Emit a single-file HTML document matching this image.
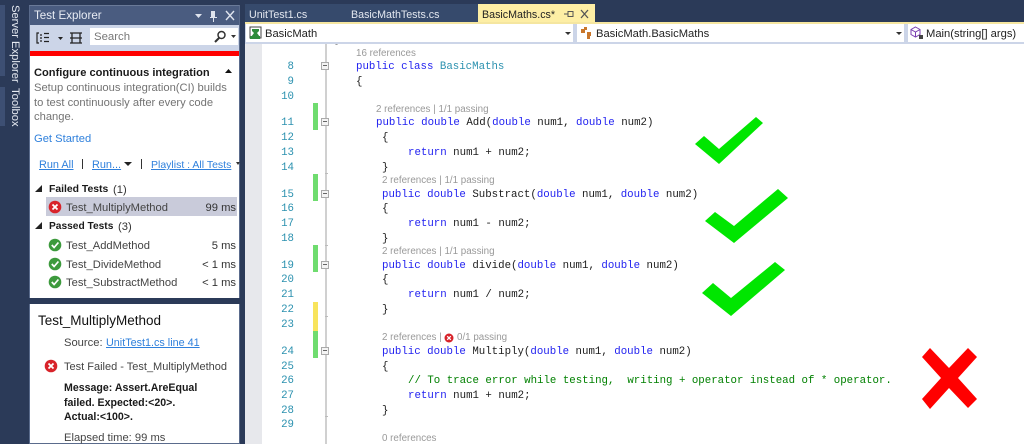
<!DOCTYPE html>
<html><head><meta charset="utf-8"><style>
*{margin:0;padding:0;box-sizing:border-box}
html,body{width:1024px;height:444px;overflow:hidden;background:#2b3a58}
#r{position:relative;width:1024px;height:444px;overflow:hidden;filter:blur(.3px);font-family:"Liberation Sans",sans-serif;font-size:11.2px;color:#222}
#r>*,.a{position:absolute}
.t{position:absolute;white-space:nowrap;line-height:14px;height:14px;margin-top:1px}
.b{font-weight:bold;color:#1a1a1a;font-size:10.6px}
.l{color:#2f80dc;text-decoration:underline}
.c{position:absolute;white-space:pre;font-family:"Liberation Mono",monospace;font-size:10.75px;line-height:14px;height:14px;color:#1c1c1c;margin-top:1px}
.k{color:#2222f0}.y{color:#2b91af}.g{color:#008000}
.n{position:absolute;left:270px;width:24px;text-align:right;font-family:"Liberation Mono",monospace;font-size:10.75px;line-height:14px;color:#2b91af;margin-top:1px}
.f{position:absolute;white-space:nowrap;font-size:9.8px;line-height:12px;color:#999;margin-top:1px}
.fb{position:absolute;left:321px;width:8px;height:8px;border:1px solid #aaa;background:#f4f4f4}
.fb:after{content:"";position:absolute;left:1px;top:2px;width:4px;height:1px;background:#666}
.m{position:absolute;left:325px;width:3px;height:1px;background:#bbb}
.bar{position:absolute;left:313px;width:5px}
.tr{position:absolute;right:788px;white-space:nowrap;line-height:14px;margin-top:1px}
</style></head><body><div id="r">
<!-- left strip -->
<div style="left:0;top:5px;width:5px;height:71px;background:#3d4f73"></div>
<div style="left:0;top:87px;width:5px;height:39px;background:#3d4f73"></div>
<div class="t" style="left:8px;top:4px;color:#e6eaf2;transform-origin:0 0;transform:translateX(14px) rotate(90deg)">Server Explorer</div>
<div class="t" style="left:8px;top:87px;color:#e6eaf2;transform-origin:0 0;transform:translateX(14px) rotate(90deg)">Toolbox</div>

<!-- test explorer -->
<div style="left:29px;top:5px;width:211px;height:439px;background:#fff;border:1px solid #5a6b8c;border-top:1px solid #6a7a98"></div>
<div style="left:30px;top:6px;width:209px;height:19px;background:#4a5c80"></div>
<div class="t" style="left:34px;top:8px;color:#e8ecf4;font-size:11.6px">Test Explorer</div>
<svg style="left:190px;top:8px" width="48" height="16" viewBox="0 0 48 16"><path d="M5 6h7l-3.500 4z" fill="#dfe4ee"/><path d="M21 3h4v6h2v1h-3v4h-1v-4h-3V9h1zM22.500 4v5" fill="#dfe4ee"/><path d="M36 3l8 9M44 3l-8 9" stroke="#dfe4ee" stroke-width="1.400" fill="none"/></svg>
<div style="left:30px;top:25px;width:209px;height:26px;background:#ccd5e8"></div>
<svg style="left:36px;top:30px" width="50" height="16" viewBox="0 0 50 16"><path d="M3 3H1v10h2M4 5h2M4 8h2M4 11h2M8 3.500h5M8 7.500h5M8 11.500h5" stroke="#222" stroke-width="1.200" fill="none"/><path d="M22 7h5l-2.500 3z" fill="#222"/><path d="M34 3h12M34 8h12M34 13h12M36 3v10M44 3v10" stroke="#222" stroke-width="1.300" fill="none"/></svg>
<div style="left:90px;top:28px;width:148px;height:17px;background:#fff"></div>
<div class="t" style="left:94px;top:29px;color:#777;font-size:11.4px">Search</div>
<svg style="left:212px;top:29px" width="26" height="16" viewBox="0 0 26 16"><circle cx="9.500" cy="6" r="3.500" fill="none" stroke="#333" stroke-width="1.500"/><path d="M7 9l-4 4" stroke="#333" stroke-width="2"/><path d="M19 6h5l-2.500 3z" fill="#333"/></svg>
<div style="left:30px;top:51px;width:209px;height:5px;background:#f00"></div>
<div class="t b" style="left:34px;top:65px;font-size:11.1px">Configure continuous integration</div>
<svg style="left:224px;top:68px" width="10" height="7"><path d="M1 5h7L4.500 1z" fill="#111"/></svg>
<div class="t" style="left:34px;top:80px;color:#737373">Setup continuous integration(CI) builds</div>
<div class="t" style="left:34px;top:95px;color:#737373">to test continuously after every code</div>
<div class="t" style="left:34px;top:109px;color:#737373">change.</div>
<div class="t" style="left:34px;top:131px;color:#2f80dc">Get Started</div>
<div class="t l" style="left:39px;top:157px;font-size:10.9px">Run All</div>
<div style="left:82px;top:159px;width:1px;height:10px;background:#333"></div>
<div class="t l" style="left:92px;top:157px;font-size:10.9px">Run...</div>
<svg style="left:123px;top:161px" width="10" height="6"><path d="M1 1h8L5 5z" fill="#222"/></svg>
<div style="left:141px;top:159px;width:1px;height:10px;background:#333"></div>
<div class="t l" style="left:151px;top:157px;font-size:10.5px">Playlist : All Tests</div>
<svg style="left:236px;top:162px" width="4" height="4"><path d="M0 0h4L2 3z" fill="#333"/></svg>

<svg style="left:34px;top:184px" width="9" height="9"><path d="M8 1v7H1z" fill="#222"/></svg>
<div class="t b" style="left:49px;top:182px;font-size:10.4px">Failed Tests</div><div class="t" style="left:113px;top:182px;color:#333">(1)</div>
<div style="left:46px;top:197px;width:191px;height:19px;background:#c9cbda"></div>
<svg style="left:48px;top:200px" width="14" height="14" viewBox="0 0 14 14"><circle cx="7" cy="7" r="6.300" fill="#d8232a"/><path d="M4.500 4.500l5 5M9.500 4.500l-5 5" stroke="#fff" stroke-width="1.800"/></svg>
<div class="t" style="left:66px;top:200px;color:#444">Test_MultiplyMethod</div><div class="tr" style="top:200px;color:#333">99 ms</div>
<svg style="left:34px;top:221px" width="9" height="9"><path d="M8 1v7H1z" fill="#222"/></svg>
<div class="t b" style="left:49px;top:219px;font-size:10.2px">Passed Tests</div><div class="t" style="left:118px;top:219px;color:#333">(3)</div>
<svg style="left:48px;top:238px" width="14" height="14" viewBox="0 0 14 14"><circle cx="7" cy="7" r="6.300" fill="#3d9a3d"/><path d="M3.800 7l2.300 2.500 4.300-5" stroke="#fff" stroke-width="1.700" fill="none"/></svg>
<div class="t" style="left:66px;top:238px;color:#444">Test_AddMethod</div><div class="tr" style="top:238px;color:#333">5 ms</div>
<svg style="left:48px;top:257px" width="14" height="14" viewBox="0 0 14 14"><circle cx="7" cy="7" r="6.300" fill="#3d9a3d"/><path d="M3.800 7l2.300 2.500 4.300-5" stroke="#fff" stroke-width="1.700" fill="none"/></svg>
<div class="t" style="left:66px;top:257px;color:#444">Test_DivideMethod</div><div class="tr" style="top:257px;color:#333">&lt; 1 ms</div>
<svg style="left:48px;top:275px" width="14" height="14" viewBox="0 0 14 14"><circle cx="7" cy="7" r="6.300" fill="#3d9a3d"/><path d="M3.800 7l2.300 2.500 4.300-5" stroke="#fff" stroke-width="1.700" fill="none"/></svg>
<div class="t" style="left:66px;top:275px;color:#444">Test_SubstractMethod</div><div class="tr" style="top:275px;color:#333">&lt; 1 ms</div>

<div style="left:29px;top:298px;width:211px;height:6px;background:#2b3a58"></div>
<div class="t" style="left:38px;top:313px;font-size:13.500px;color:#111">Test_MultiplyMethod</div>
<div class="t" style="left:64px;top:335px;color:#444">Source:</div>
<div class="t l" style="left:106px;top:335px;font-size:10.8px">UnitTest1.cs line 41</div>
<svg style="left:44px;top:359px" width="14" height="14" viewBox="0 0 14 14"><circle cx="7" cy="7" r="6.300" fill="#d8232a"/><path d="M4.500 4.500l5 5M9.500 4.500l-5 5" stroke="#fff" stroke-width="1.800"/></svg>
<div class="t" style="left:64px;top:359px;color:#444;font-size:11px">Test Failed - Test_MultiplyMethod</div>
<div class="t b" style="left:64px;top:380px">Message: Assert.AreEqual</div>
<div class="t b" style="left:64px;top:395px">failed. Expected:&lt;20&gt;.</div>
<div class="t b" style="left:64px;top:409px">Actual:&lt;100&gt;.</div>
<div class="t" style="left:64px;top:430px;color:#444">Elapsed time: 99 ms</div>

<!-- tabs -->
<div style="left:245px;top:4px;width:233px;height:18px;background:#364a6c"></div>
<div class="t" style="left:249px;top:7px;color:#e4e8f0;font-size:10.7px">UnitTest1.cs</div>
<div class="t" style="left:351px;top:7px;color:#e4e8f0;font-size:10.7px">BasicMathTests.cs</div>
<div style="left:478px;top:4px;width:117px;height:18px;background:#fdeea5"></div>
<div class="t" style="left:482px;top:7px;color:#222;font-size:10.7px">BasicMaths.cs*</div>
<svg style="left:562px;top:8px" width="30" height="12" viewBox="0 0 30 12"><path d="M2 6h4M6 3.500h5v5H6zM6 3v6" stroke="#555" stroke-width="1" fill="none"/><path d="M19 2l7 8M26 2l-7 8" stroke="#555" stroke-width="1.300" fill="none"/></svg>
<div style="left:245px;top:22px;width:779px;height:2px;background:#f5e6a0"></div>

<!-- nav bar -->
<div style="left:245px;top:24px;width:779px;height:20px;background:#ccd5e8"></div>
<div style="left:246px;top:24px;width:327px;height:18px;background:#fff"></div>
<div style="left:577px;top:24px;width:327px;height:18px;background:#fff"></div>
<div style="left:908px;top:24px;width:116px;height:18px;background:#fff"></div>
<svg style="left:249px;top:26px" width="14" height="14" viewBox="0 0 14 14"><path d="M1 1h11v11H1z" fill="#fff" stroke="#444"/><path d="M3 3h7v2l-2 2 3 4H2l3-4-2-2z" fill="#2d8a3a"/><path d="M1 10h10v3H1z" fill="#2d8a3a"/></svg>
<div class="t" style="left:265px;top:26px;font-size:11.2px;color:#222">BasicMath</div>
<svg style="left:565px;top:32px" width="7" height="5"><path d="M0 0h6L3 3z" fill="#333"/></svg>
<svg style="left:579px;top:26px" width="15" height="14" viewBox="0 0 15 14"><path d="M2 3h4v4H2zM8 6h4v4H8zM5 1h3v3H5zM8 10h3v3H8z" fill="#c9762a"/></svg>
<div class="t" style="left:596px;top:26px;font-size:11.2px;color:#222">BasicMath.BasicMaths</div>
<svg style="left:896px;top:32px" width="7" height="5"><path d="M0 0h6L3 3z" fill="#333"/></svg>
<svg style="left:909px;top:26px" width="16" height="14" viewBox="0 0 16 14"><path d="M6.500 1l4.500 2.500v5L6.500 11 2 8.500v-5zM2 3.500l4.500 2.500 4.500-2.500M6.500 6v5" fill="none" stroke="#7a3fb0" stroke-width="1"/><path d="M10 9h4v4h-4z" fill="#444"/></svg>
<div class="t" style="left:926px;top:26px;font-size:11.2px;color:#222">Main(string[] args)</div>

<!-- editor -->
<div style="left:240px;top:0;width:5px;height:444px;background:#2b3a58"></div>
<div style="left:245px;top:44px;width:779px;height:400px;background:#fff"></div>
<div style="left:245px;top:44px;width:17px;height:400px;background:#e7e8ec"></div>
<div style="left:325px;top:44px;width:2px;height:400px;background:#d0d0d0"></div>
<div style="left:332px;top:44px;width:8px;height:3px;overflow:hidden"><div class="c" style="left:0;top:-12px;color:#444">{</div></div>

<div class="bar" style="top:103px;height:27px;background:#6fdc6f"></div>
<div class="bar" style="top:174px;height:27px;background:#6fdc6f"></div>
<div class="bar" style="top:245px;height:27px;background:#6fdc6f"></div>
<div class="bar" style="top:302px;height:29px;background:#f8e45c"></div>
<div class="bar" style="top:331px;height:27px;background:#6fdc6f"></div>

<div class="fb" style="top:62px"></div><div class="fb" style="top:118px"></div><div class="fb" style="top:190px"></div><div class="fb" style="top:261px"></div><div class="fb" style="top:347px"></div>
<div class="m" style="top:173px"></div><div class="m" style="top:245px"></div><div class="m" style="top:316px"></div><div class="m" style="top:416px"></div>

<div class="n" style="top:59px">8</div><div class="n" style="top:74px">9</div><div class="n" style="top:89px">10</div>
<div class="n" style="top:115px">11</div><div class="n" style="top:130px">12</div><div class="n" style="top:145px">13</div><div class="n" style="top:160px">14</div>
<div class="n" style="top:187px">15</div><div class="n" style="top:201px">16</div><div class="n" style="top:216px">17</div><div class="n" style="top:231px">18</div>
<div class="n" style="top:258px">19</div><div class="n" style="top:272px">20</div><div class="n" style="top:287px">21</div><div class="n" style="top:302px">22</div><div class="n" style="top:317px">23</div>
<div class="n" style="top:344px">24</div><div class="n" style="top:359px">25</div><div class="n" style="top:373px">26</div><div class="n" style="top:388px">27</div><div class="n" style="top:403px">28</div><div class="n" style="top:417px">29</div>

<div class="f" style="left:356px;top:47px">16 references</div>
<div class="c" style="left:356px;top:59px"><span class="k">public class</span> <span class="y">BasicMaths</span></div>
<div class="c" style="left:356px;top:74px">{</div>

<div class="f" style="left:376px;top:103px">2 references | 1/1 passing</div>
<div class="c" style="left:376px;top:115px"><span class="k">public double</span> Add(<span class="k">double</span> num1, <span class="k">double</span> num2)</div>
<div class="c" style="left:382px;top:130px">{</div>
<div class="c" style="left:408px;top:145px"><span class="k">return</span> num1 + num2;</div>
<div class="c" style="left:382px;top:160px">}</div>

<div class="f" style="left:382px;top:174px">2 references | 1/1 passing</div>
<div class="c" style="left:382px;top:187px"><span class="k">public double</span> Substract(<span class="k">double</span> num1, <span class="k">double</span> num2)</div>
<div class="c" style="left:382px;top:201px">{</div>
<div class="c" style="left:408px;top:216px"><span class="k">return</span> num1 - num2;</div>
<div class="c" style="left:382px;top:231px">}</div>

<div class="f" style="left:382px;top:245px">2 references | 1/1 passing</div>
<div class="c" style="left:382px;top:258px"><span class="k">public double</span> divide(<span class="k">double</span> num1, <span class="k">double</span> num2)</div>
<div class="c" style="left:382px;top:272px">{</div>
<div class="c" style="left:408px;top:287px"><span class="k">return</span> num1 / num2;</div>
<div class="c" style="left:382px;top:302px">}</div>

<div class="f" style="left:382px;top:331px">2 references |</div>
<svg style="left:444px;top:333px" width="10" height="10" viewBox="0 0 10 10"><circle cx="5" cy="5" r="4.500" fill="#d8232a"/><path d="M3.200 3.200l3.600 3.600M6.800 3.200l-3.600 3.600" stroke="#fff" stroke-width="1.300"/></svg>
<div class="f" style="left:457px;top:331px">0/1 passing</div>
<div class="c" style="left:382px;top:344px"><span class="k">public double</span> Multiply(<span class="k">double</span> num1, <span class="k">double</span> num2)</div>
<div class="c" style="left:382px;top:359px">{</div>
<div class="c g" style="left:408px;top:373px">// To trace error while testing,  writing + operator instead of * operator.</div>
<div class="c" style="left:408px;top:388px"><span class="k">return</span> num1 + num2;</div>
<div class="c" style="left:382px;top:403px">}</div>
<div class="f" style="left:382px;top:432px">0 references</div>

<!-- marks -->
<svg style="left:0;top:0" width="1024" height="444" viewBox="0 0 1024 444">
<path d="M756 117l7 6-44 41-24-20 9-8 15 13z" fill="#00e600"/>
<path d="M778 189l10 9-54 45-29-22 10-9 19 14z" fill="#00e600"/>
<path d="M775 262l10 8-54 46-29-23 11-10 18 15z" fill="#00e600"/>
<path d="M922 357l8-9 19 20 19-20 9 9-19 21 19 21-9 9-19-20-19 21-8-10 19-21z" fill="#f00"/>
</svg>
</div></body></html>
